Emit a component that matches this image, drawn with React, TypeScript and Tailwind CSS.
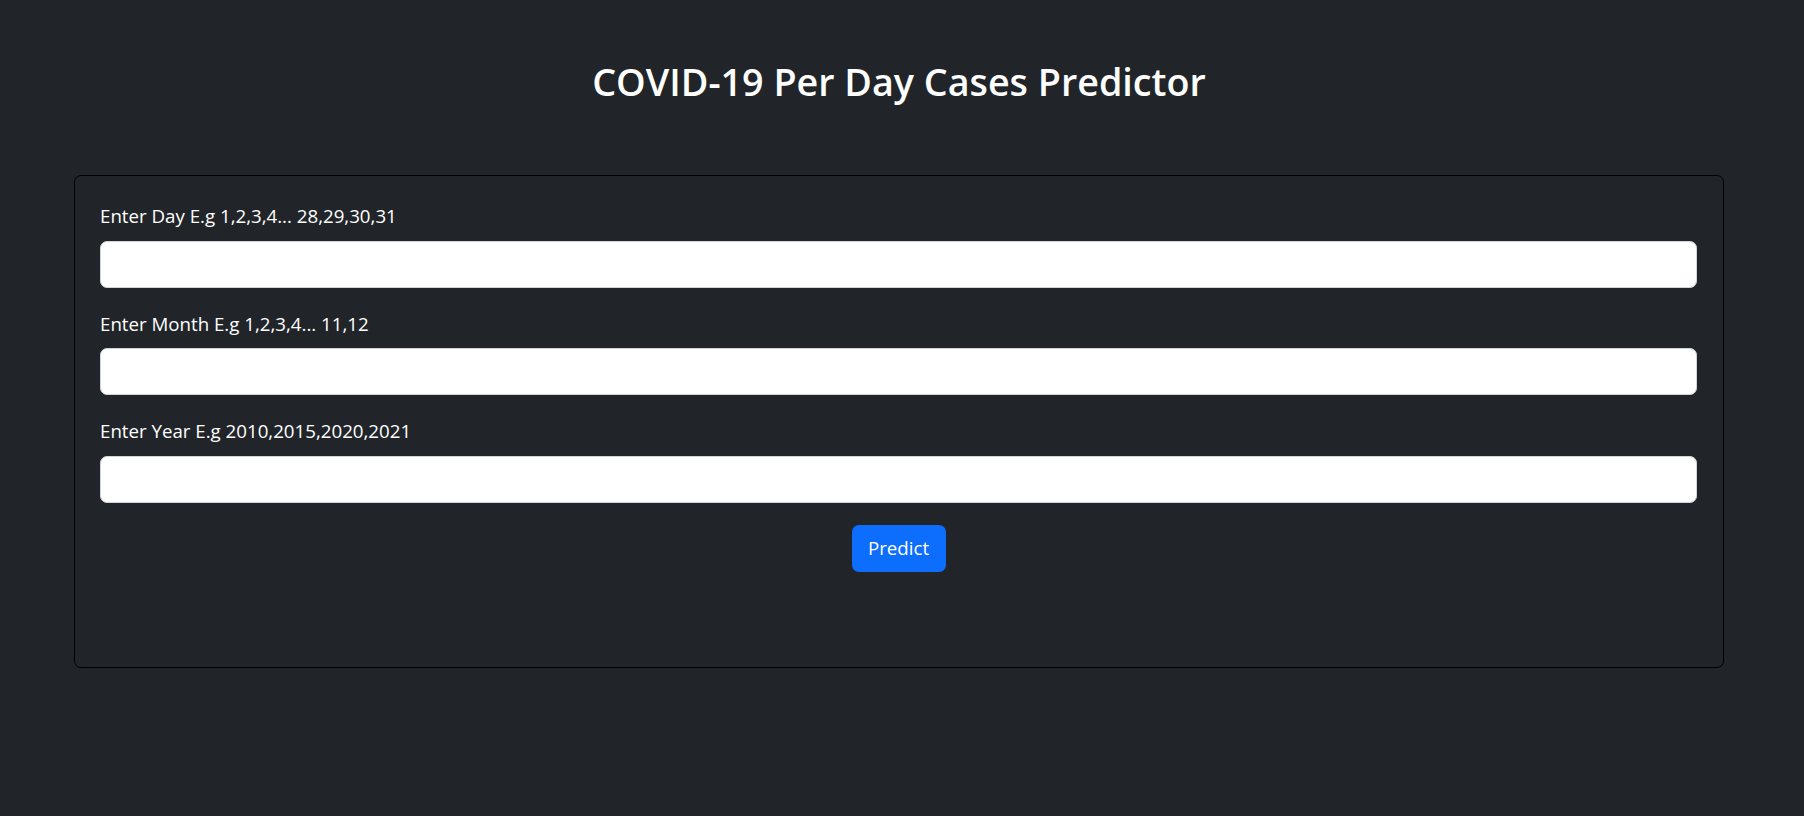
import React from 'react'

const fields = [
  { id: 'day', label: 'Enter Day E.g 1,2,3,4... 28,29,30,31' },
  { id: 'month', label: 'Enter Month E.g 1,2,3,4... 11,12' },
  { id: 'year', label: 'Enter Year E.g 2010,2015,2020,2021' },
]

export default function App() {
  return (
    <div className="min-h-screen w-full bg-[#212529] text-white pr-[6px] font-['Open_Sans',sans-serif]">
      <h1 className="pt-[59px] text-center text-[37.7px] font-semibold leading-[1.2]">
        COVID-19 Per Day Cases Predictor
      </h1>
      <div className="px-[74px] pt-[71px]">
        <form className="rounded-[7px] border border-black pt-[26px] pl-[25px] pr-[26px] pb-[95px]">
          {fields.map((f) => (
            <div key={f.id} className="mb-[22px] last:mb-[20px]">
              <label htmlFor={f.id} className="block text-[18.7px] leading-[27.6px] mb-[11px]">
                {f.label}
              </label>
              <input
                id={f.id}
                type="text"
                className="block w-full h-[47px] rounded-[7px] border border-[#ced4da] bg-white px-[14px] text-[18.4px] text-[#212529] outline-none"
              />
            </div>
          ))}
          <div className="flex justify-center">
            <button
              type="button"
              className="h-[47px] w-[94px] rounded-[7px] bg-[#0d6efd] text-[18.7px] text-white"
            >
              Predict
            </button>
          </div>
        </form>
      </div>
    </div>
  )
}
